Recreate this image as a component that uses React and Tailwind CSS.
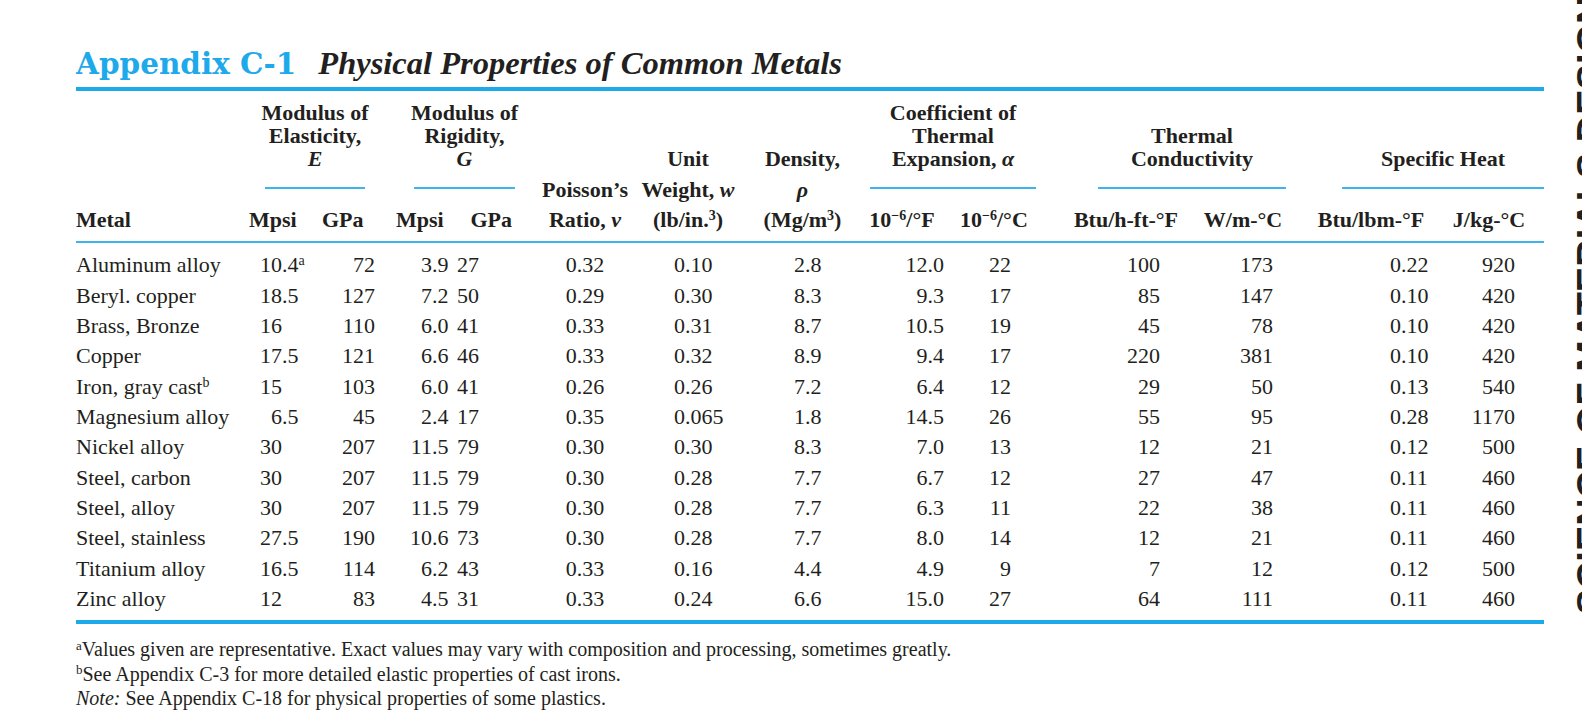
import React from 'react';

const cols =
  'grid grid-cols-[169px_77px_58px_70px_65px_125px_105px_115px_100px_80px_140px_110px_150px_104px]';

// name, E Mpsi, E GPa, G Mpsi, G GPa, nu, w, rho, alphaF, alphaC, kBtu, kW, cBtu, cJ
const rows = [
  ['Aluminum alloy', '10.4', '72', '3.9', '27', '0.32', '0.10', '2.8', '12.0', '22', '100', '173', '0.22', '920'],
  ['Beryl. copper', '18.5', '127', '7.2', '50', '0.29', '0.30', '8.3', '9.3', '17', '85', '147', '0.10', '420'],
  ['Brass, Bronze', '16', '110', '6.0', '41', '0.33', '0.31', '8.7', '10.5', '19', '45', '78', '0.10', '420'],
  ['Copper', '17.5', '121', '6.6', '46', '0.33', '0.32', '8.9', '9.4', '17', '220', '381', '0.10', '420'],
  ['Iron, gray cast', '15', '103', '6.0', '41', '0.26', '0.26', '7.2', '6.4', '12', '29', '50', '0.13', '540'],
  ['Magnesium alloy', '6.5', '45', '2.4', '17', '0.35', '0.065', '1.8', '14.5', '26', '55', '95', '0.28', '1170'],
  ['Nickel alloy', '30', '207', '11.5', '79', '0.30', '0.30', '8.3', '7.0', '13', '12', '21', '0.12', '500'],
  ['Steel, carbon', '30', '207', '11.5', '79', '0.30', '0.28', '7.7', '6.7', '12', '27', '47', '0.11', '460'],
  ['Steel, alloy', '30', '207', '11.5', '79', '0.30', '0.28', '7.7', '6.3', '11', '22', '38', '0.11', '460'],
  ['Steel, stainless', '27.5', '190', '10.6', '73', '0.30', '0.28', '7.7', '8.0', '14', '12', '21', '0.11', '460'],
  ['Titanium alloy', '16.5', '114', '6.2', '43', '0.33', '0.16', '4.4', '4.9', '9', '7', '12', '0.12', '500'],
  ['Zinc alloy', '12', '83', '4.5', '31', '0.33', '0.24', '6.6', '15.0', '27', '64', '111', '0.11', '460'],
];

// decimal-aligned number: integer part in a fixed box
function Dec({ v, sup }) {
  const [i, f] = v.split('.');
  return (
    <span>
      <span className="inline-block w-[22px] text-right">{i}</span>
      {f !== undefined ? '.' + f : ''}
      {sup && <sup className="text-[14px]">{sup}</sup>}
    </span>
  );
}

function Line() {
  return <div className="mt-[17px] h-[2px] bg-[#3db4ec]" />;
}

export default function App() {
  return (
    <div className="flex w-[1582px] h-[726px] overflow-hidden bg-white text-[#231f20] [font-family:'Liberation_Serif',serif]">
      <div className="w-[1562px] shrink-0 pl-[76px] pt-[43px]">
        <div className="w-[1468px]">
          {/* Title */}
          <div className="flex items-baseline h-[40px] leading-[40px]">
            <span className="text-[29.5px] font-bold text-[#1eaaea] [font-family:'DejaVu_Serif',serif]">
              Appendix C-1
            </span>
            <span className="ml-[22px] text-[32.5px] font-bold italic">
              Physical Properties of Common Metals
            </span>
          </div>
          <div className="mt-[4px] h-[4px] bg-[#1eaaea]" />

          {/* Header */}
          <div
            className={
              cols +
              ' grid-rows-[23px_23px_23px_31px_30px] pt-[10px] pb-[10px] text-[22px] font-bold leading-[23px]'
            }
          >
            <div className="col-start-1 row-start-5 self-end">Metal</div>

            <div className="col-start-2 col-span-2 row-start-1 row-span-3 ml-[20px] mr-[15px] flex flex-col items-center justify-end">
              <div className="whitespace-nowrap">Modulus of</div>
              <div>Elasticity,</div>
              <div className="italic">E</div>
            </div>
            <div className="col-start-2 col-span-2 row-start-4 ml-[20px] mr-[15px]">
              <Line />
            </div>
            <div className="col-start-2 row-start-5 self-end pl-[4px]">Mpsi</div>
            <div className="col-start-3 row-start-5 self-end text-right pr-[17px]">GPa</div>

            <div className="col-start-4 col-span-2 row-start-1 row-span-3 ml-[34px] flex flex-col items-center justify-end">
              <div className="whitespace-nowrap">Modulus of</div>
              <div>Rigidity,</div>
              <div className="italic">G</div>
            </div>
            <div className="col-start-4 col-span-2 row-start-4 ml-[34px]">
              <Line />
            </div>
            <div className="col-start-4 row-start-5 self-end pl-[16px]">Mpsi</div>
            <div className="col-start-5 row-start-5 self-end text-right pr-[3px]">GPa</div>

            <div className="col-start-6 row-start-4 self-end text-center pl-[15px] whitespace-nowrap">Poisson’s</div>
            <div className="col-start-6 row-start-5 self-end text-center pl-[15px] whitespace-nowrap">
              Ratio, <span className="italic">ν</span>
            </div>

            <div className="col-start-7 row-start-3 self-end text-center pr-[9px]">Unit</div>
            <div className="col-start-7 row-start-4 self-end text-center pr-[9px] whitespace-nowrap">
              Weight, <span className="italic">w</span>
            </div>
            <div className="col-start-7 row-start-5 self-end text-center pr-[9px] whitespace-nowrap">
              (lb/in.<sup className="text-[14px]">3</sup>)
            </div>

            <div className="col-start-8 row-start-3 self-end text-center">Density,</div>
            <div className="col-start-8 row-start-4 self-end text-center italic">ρ</div>
            <div className="col-start-8 row-start-5 self-end text-center whitespace-nowrap">
              (Mg/m<sup className="text-[14px]">3</sup>)
            </div>

            <div className="col-start-9 col-span-2 row-start-1 row-span-3 ml-[10px] mr-[4px] flex flex-col items-center justify-end">
              <div className="whitespace-nowrap">Coefficient of</div>
              <div>Thermal</div>
              <div className="whitespace-nowrap">
                Expansion, <span className="italic">α</span>
              </div>
            </div>
            <div className="col-start-9 col-span-2 row-start-4 ml-[10px] mr-[4px]">
              <Line />
            </div>
            <div className="col-start-9 row-start-5 self-end text-center pr-[16px] whitespace-nowrap">
              10<sup className="text-[14px]">−6</sup>/°F
            </div>
            <div className="col-start-10 row-start-5 self-end text-center pr-[16px] whitespace-nowrap">
              10<sup className="text-[14px]">−6</sup>/°C
            </div>

            <div className="col-start-11 col-span-2 row-start-1 row-span-3 ml-[58px] mr-[4px] flex flex-col items-center justify-end">
              <div>Thermal</div>
              <div>Conductivity</div>
            </div>
            <div className="col-start-11 col-span-2 row-start-4 ml-[58px] mr-[4px]">
              <Line />
            </div>
            <div className="col-start-11 row-start-5 self-end text-center pl-[32px] whitespace-nowrap">Btu/h-ft-°F</div>
            <div className="col-start-12 row-start-5 self-end text-center pl-[16px] whitespace-nowrap">W/m-°C</div>

            <div className="col-start-13 col-span-2 row-start-1 row-span-3 ml-[52px] flex flex-col items-center justify-end">
              <div className="whitespace-nowrap">Specific Heat</div>
            </div>
            <div className="col-start-13 col-span-2 row-start-4 ml-[52px]">
              <Line />
            </div>
            <div className="col-start-13 row-start-5 self-end text-center pl-[12px] whitespace-nowrap">Btu/lbm-°F</div>
            <div className="col-start-14 row-start-5 self-end text-center pr-[6px] whitespace-nowrap">J/kg-°C</div>
          </div>
          <div className="h-[2px] bg-[#3db4ec]" />

          {/* Body */}
          <div className={cols + ' auto-rows-[30.36px] pt-[7px] text-[22px] leading-[24px]'}>
            {rows.map((r) => (
              <React.Fragment key={r[0]}>
                <div className="flex items-center whitespace-nowrap">
                  <span>
                    {r[0]}
                    {r[0] === 'Iron, gray cast' && <sup className="text-[14px]">b</sup>}
                  </span>
                </div>
                <div className="flex items-center pl-[15px]">
                  <Dec v={r[1]} sup={r[0] === 'Aluminum alloy' ? 'a' : null} />
                </div>
                <div className="flex items-center justify-end pr-[5px]">{r[2]}</div>
                <div className="flex items-center pl-[30px]">
                  <Dec v={r[3]} />
                </div>
                <div className="flex items-center pl-[7px]">{r[4]}</div>
                <div className="flex items-center justify-center pl-[15px]">{r[5]}</div>
                <div className="flex items-center pl-[34px]">{r[6]}</div>
                <div className="flex items-center pl-[49px]">{r[7]}</div>
                <div className="flex items-center justify-end pr-[16px]">{r[8]}</div>
                <div className="flex items-center justify-end pr-[29px]">{r[9]}</div>
                <div className="flex items-center justify-end pr-[20px]">{r[10]}</div>
                <div className="flex items-center justify-end pr-[17px]">{r[11]}</div>
                <div className="flex items-center pl-[100px]">{r[12]}</div>
                <div className="flex items-center justify-end pr-[29px]">{r[13]}</div>
              </React.Fragment>
            ))}
          </div>
          <div className="mt-[6px] h-[4px] bg-[#1eaaea]" />

          {/* Footnotes */}
          <div className="mt-[13px] text-[20px] leading-[24.5px]">
            <div>
              <sup className="text-[13px]">a</sup>Values given are representative. Exact values may vary with composition
              and processing, sometimes greatly.
            </div>
            <div>
              <sup className="text-[13px]">b</sup>See Appendix C-3 for more detailed elastic properties of cast irons.
            </div>
            <div>
              <span className="italic">Note:</span> See Appendix C-18 for physical properties of some plastics.
            </div>
          </div>
        </div>
      </div>

      {/* clipped text from the facing page */}
      <div className="w-[20px] h-[726px] shrink-0 overflow-hidden flex flex-col justify-end pb-[112px] pl-[10px]">
        <div className="self-start shrink-0 w-[38px] [writing-mode:vertical-rl] rotate-180 whitespace-nowrap text-[38px] leading-[38px] font-bold [font-family:'Liberation_Sans',sans-serif]">
          SCIENCE OF MATERIALS DESIGN TEC
        </div>
      </div>
    </div>
  );
}
